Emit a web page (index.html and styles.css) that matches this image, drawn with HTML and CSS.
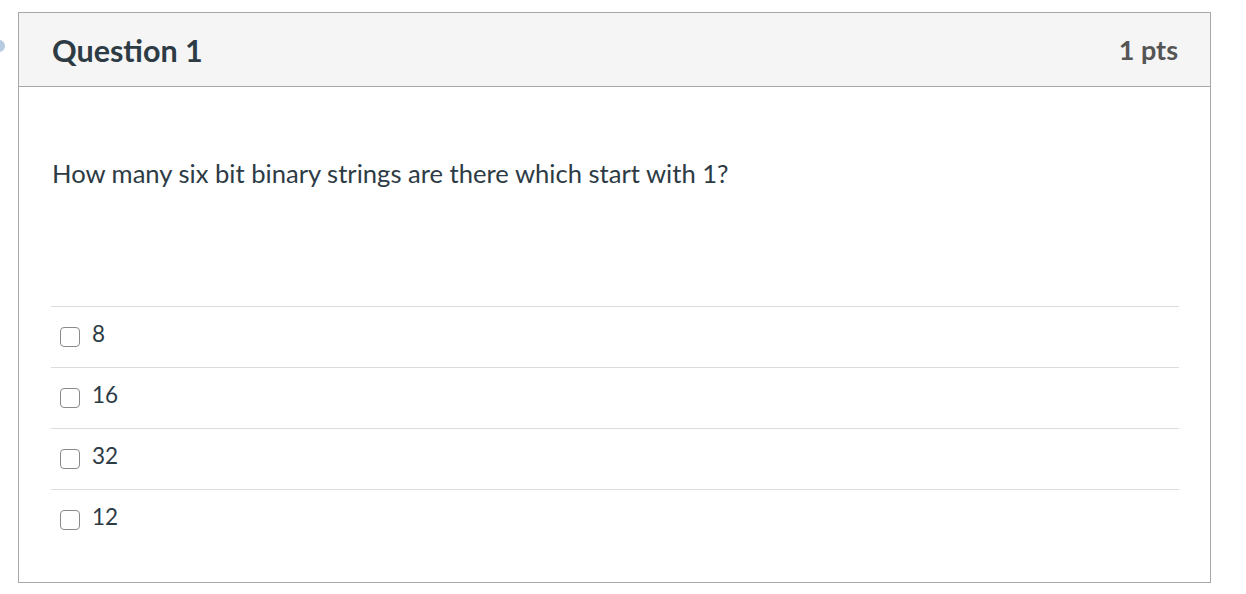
FILE: index.html
```html
<!DOCTYPE html>
<html>
<head>
<meta charset="utf-8">
<link rel="stylesheet" href="styles.css">
</head>
<body>
<div class="flag"></div>
<div class="question">
  <div class="q-header">
    <h2 class="q-title">Question 1</h2>
    <div class="q-points">1 pts</div>
  </div>
  <div class="q-body">
    <p class="q-text">How many six bit binary strings are there which start with 1?</p>
    <div class="answers">
      <label class="answer"><span class="box"></span><span class="label">8</span></label>
      <label class="answer"><span class="box"></span><span class="label">16</span></label>
      <label class="answer"><span class="box"></span><span class="label">32</span></label>
      <label class="answer"><span class="box"></span><span class="label">12</span></label>
    </div>
  </div>
</div>
</body>
</html>
```
FILE: styles.css
```css
html, body { margin: 0; padding: 0; background: #fff; }
body {
  font-family: Lato, "Noto Sans", sans-serif;
  color: #2d3b45;
  padding: 12px 0 0 18px;
  position: relative;
}
.flag {
  position: absolute;
  left: -7px;
  top: 40px;
  width: 12px;
  height: 12px;
  border-radius: 50%;
  background: #b4cbe0;
}
.question {
  width: 1193px;
  box-sizing: border-box;
  border: 1px solid #a8a8a8;
}
.q-header {
  height: 74px;
  box-sizing: border-box;
  background: #f5f5f5;
  border-bottom: 1px solid #a8a8a8;
  display: flex;
  align-items: center;
  justify-content: space-between;
  padding: 0 32px 0 33px;
}
.q-title {
  margin: 0;
  font-size: 30.5px;
  font-weight: 700;
  color: #2d3b45;
}
.q-points {
  font-size: 27px;
  font-weight: 700;
  color: #555;
}
.q-body {
  padding: 62px 31px 32px 33px;
}
.q-text {
  margin: 0 0 109px 0;
  font-size: 25.6px;
  line-height: 48px;
}
.answers {
  margin-left: -1px;
}
.answer {
  display: flex;
  align-items: center;
  height: 61px;
  box-sizing: border-box;
  border-top: 1px solid #dcdcdc;
  padding-left: 9px;
}
.box {
  width: 20px;
  height: 20px;
  border: 1.5px solid #8a8a8a;
  border-radius: 4px;
  box-sizing: border-box;
  margin-right: 12px;
}
.label {
  font-size: 22.5px;
  line-height: 1;
  margin-bottom: 5px;
  color: #2d3b45;
}
```
